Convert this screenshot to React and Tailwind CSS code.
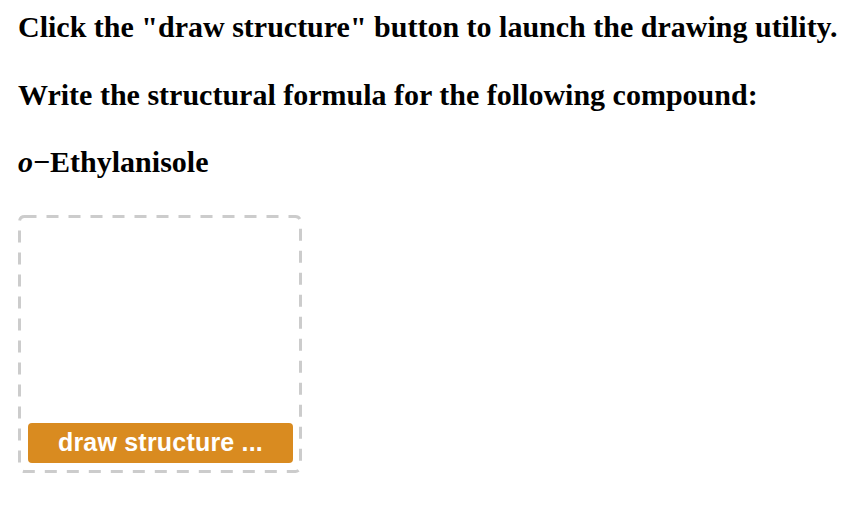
export default function App() {
  return (
    <div className="bg-white w-[860px] h-[508px] overflow-hidden">
      <div className="pl-[18px] pt-[8px] font-['Liberation_Serif',serif] font-bold text-[30px] leading-[37.5px] text-black">
        <p>Click the "draw structure" button to launch the drawing utility.</p>
        <p className="mt-[30px]">Write the structural formula for the following compound:</p>
        <p className="mt-[30px]"><i>o</i>−Ethylanisole</p>
      </div>
      <div className="relative ml-[18px] mt-[34px] w-[284px] h-[258px] flex flex-col justify-end pl-[10px] pr-[9px] pb-[10px]">
        <svg className="absolute inset-0 pointer-events-none" width="284" height="258" viewBox="0 0 284 258">
          <rect x="1.5" y="1.5" width="281" height="255" rx="5" ry="5" fill="none" stroke="#cccccc" strokeWidth="3" strokeDasharray="12 10" />
        </svg>
        <button className="relative h-[40px] w-full bg-[#d98b20] rounded-[4px] text-white font-bold text-[25px] tracking-[0.2px] font-['Liberation_Sans',sans-serif] flex items-center justify-center">
          draw structure ...
        </button>
      </div>
    </div>
  );
}
